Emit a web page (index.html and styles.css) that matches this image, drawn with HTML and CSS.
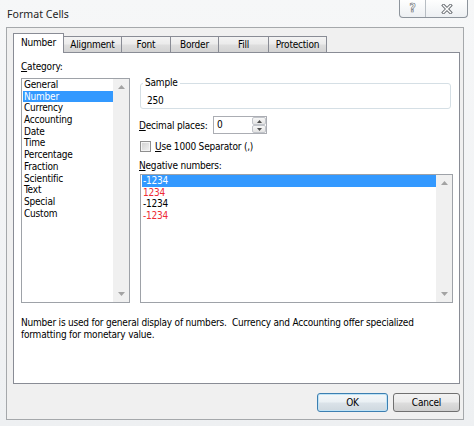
FILE: index.html
```html
<!DOCTYPE html>
<html>
<head>
<meta charset="utf-8">
<title>Format Cells</title>
<link rel="stylesheet" href="styles.css">
</head>
<body>
<div class="window">
  <div class="titlebar">
    <span class="title">Format Cells</span>
    <div class="caption">
      <div class="cbtn help"><span class="qmark">?</span></div>
      <div class="cbtn close">
        <svg width="12" height="10" viewBox="0 0 12 10"><path d="M2.5 1.5 L9.5 8.5 M9.5 1.5 L2.5 8.5" stroke="#6b6f74" stroke-width="3.2" fill="none" stroke-linecap="square"/><path d="M2.5 1.5 L9.5 8.5 M9.5 1.5 L2.5 8.5" stroke="#ffffff" stroke-width="1.4" fill="none" stroke-linecap="square"/></svg>
      </div>
    </div>
  </div>
  <div class="client">
    <div class="tabs">
      <div class="tab selected">Number</div>
      <div class="tab w58">Alignment</div>
      <div class="tab w49">Font</div>
      <div class="tab w48">Border</div>
      <div class="tab w50">Fill</div>
      <div class="tab w58">Protection</div>
    </div>
    <div class="panel">
      <div class="cols">
        <div class="leftcol">
          <div class="label"><u>C</u>ategory:</div>
          <div class="listbox catlist">
            <div class="items">
              <div class="item">General</div>
              <div class="item sel">Number</div>
              <div class="item">Currency</div>
              <div class="item">Accounting</div>
              <div class="item">Date</div>
              <div class="item">Time</div>
              <div class="item">Percentage</div>
              <div class="item">Fraction</div>
              <div class="item">Scientific</div>
              <div class="item">Text</div>
              <div class="item">Special</div>
              <div class="item">Custom</div>
            </div>
            <div class="scrollbar">
              <svg class="arr" width="7" height="4" viewBox="0 0 7 4"><polygon points="0,4 7,4 3.5,0" fill="#a3a3a3"/></svg>
              <svg class="arr" width="7" height="4" viewBox="0 0 7 4"><polygon points="0,0 7,0 3.5,4" fill="#a3a3a3"/></svg>
            </div>
          </div>
        </div>
        <div class="rightcol">
          <fieldset class="sample">
            <legend>Sample</legend>
            <div class="sampleval">250</div>
          </fieldset>
          <div class="decrow">
            <span class="declabel"><u>D</u>ecimal places:</span>
            <div class="spin">
              <span class="spinval">0</span>
              <div class="spinbtns">
                <div class="sb"><svg width="5" height="3" viewBox="0 0 5 3"><polygon points="0,3 5,3 2.5,0" fill="#4d4d4d"/></svg></div>
                <div class="sb"><svg width="5" height="3" viewBox="0 0 5 3"><polygon points="0,0 5,0 2.5,3" fill="#4d4d4d"/></svg></div>
              </div>
            </div>
          </div>
          <div class="chkrow">
            <span class="chk"></span>
            <span><u>U</u>se 1000 Separator (,)</span>
          </div>
          <div class="label neglabel"><u>N</u>egative numbers:</div>
          <div class="listbox neglist">
            <div class="items">
              <div class="item sel">-1234</div>
              <div class="item red">1234</div>
              <div class="item">-1234</div>
              <div class="item red">-1234</div>
            </div>
            <div class="scrollbar">
              <svg class="arr" width="7" height="4" viewBox="0 0 7 4"><polygon points="0,4 7,4 3.5,0" fill="#a3a3a3"/></svg>
              <svg class="arr" width="7" height="4" viewBox="0 0 7 4"><polygon points="0,0 7,0 3.5,4" fill="#a3a3a3"/></svg>
            </div>
          </div>
        </div>
      </div>
      <p class="desc">Number is used for general display of numbers.&nbsp; Currency and Accounting offer specialized formatting for monetary value.</p>
    </div>
    <div class="buttons">
      <div class="btn default">OK</div>
      <div class="btn cancel">Cancel</div>
    </div>
  </div>
</div>
</body>
</html>
```
FILE: styles.css
```css
html, body {
  margin: 0;
  padding: 0;
}
body {
  width: 474px;
  height: 426px;
  overflow: hidden;
  background: linear-gradient(180deg, #f6f7f8 0%, #eef0f2 100%);
  font-family: "DejaVu Sans Condensed", "DejaVu Sans", sans-serif;
  font-stretch: condensed;
  font-size: 10px;
  letter-spacing: -0.2px;
  color: #000;
}
.window {
  display: flex;
  flex-direction: column;
  height: 426px;
}
.titlebar {
  height: 27px;
  display: flex;
  justify-content: space-between;
  align-items: flex-start;
}
.title {
  margin: 6px 0 0 7px;
  font-family: "Noto Sans", sans-serif;
  font-stretch: normal;
  letter-spacing: 0;
  font-size: 10.6px;
  line-height: 16px;
  color: #1e1e1e;
}
.caption {
  display: flex;
  height: 17px;
  margin-right: 6px;
  border: 1px solid #8d949c;
  border-top: none;
  border-radius: 0 0 4px 4px;
  background: linear-gradient(180deg, rgba(255,255,255,0.9), rgba(236,239,242,0.9));
}
.cbtn {
  display: flex;
  align-items: center;
  justify-content: center;
}
.cbtn.help {
  width: 25px;
}
.cbtn.close {
  width: 41px;
  border-left: 1px solid #b7bdc3;
}
.qmark {
  font-family: "DejaVu Sans", sans-serif;
  font-size: 12px;
  font-weight: bold;
  line-height: 13px;
  color: #fff;
  -webkit-text-stroke: 0.6px #6b6f74;
}
.client {
  box-sizing: border-box;
  width: 458px;
  height: 393px;
  margin-left: 6px;
  border: 1px solid #a5a8ab;
  background: #f0f0f0;
  padding: 5px 3px 0 6px;
}
.tabs {
  display: flex;
  align-items: flex-end;
  height: 19px;
  position: relative;
  z-index: 1;
}
.tab {
  box-sizing: border-box;
  width: 51px;
  height: 16px;
  margin-right: -1px;
  border: 1px solid #898c95;
  border-bottom: none;
  background: linear-gradient(180deg, #f3f3f3 0%, #ebebeb 48%, #dedede 52%, #d3d3d3 100%);
  text-align: center;
  line-height: 15px;
  color: #000;
}
.tab.selected {
  width: 51px;
  height: 20px;
  margin-bottom: -1px;
  background: #fff;
  line-height: 17px;
  position: relative;
}
.tab.w58 { width: 59px; }
.tab.w49 { width: 50px; }
.tab.w48 { width: 49px; }
.tab.w50 { width: 51px; }
.panel {
  box-sizing: border-box;
  width: 447px;
  height: 332px;
  border: 1px solid #898c95;
  background: #fff;
  padding: 8px 6px 0 7px;
}
.cols {
  display: flex;
}
.leftcol {
  width: 109px;
}
.label {
  line-height: 12px;
  height: 12px;
}
.listbox {
  box-sizing: border-box;
  display: flex;
  border: 1px solid #9ea2a8;
  background: #fff;
}
.catlist {
  margin-top: 5px;
  width: 109px;
  height: 225px;
}
.items {
  flex: 1;
  padding: 0 0 0 1px;
}
.item {
  height: 11.7px;
  line-height: 11.7px;
  padding-left: 1px;
  white-space: nowrap;
}
.item.sel {
  background: #3399ff;
  color: #fff;
}
.item.red {
  color: #ee2b33;
}
.scrollbar {
  width: 16px;
  background: #f0f0f0;
  display: flex;
  flex-direction: column;
  justify-content: space-between;
  align-items: center;
  padding: 6px 0 6px;
  box-sizing: border-box;
}
.rightcol {
  margin-left: 9px;
  width: 314px;
}
.sample {
  margin: 16px 0 0 1px;
  width: 311px;
  box-sizing: border-box;
  height: 32px;
  border: 1px solid #d5dfe5;
  border-radius: 3px;
  padding: 0 0 1px 6px;
}
.sample legend {
  padding: 0 2px;
  margin-left: -4px;
  line-height: 12px;
}
.sampleval {
  margin-top: 6px;
  line-height: 12px;
}
.decrow {
  display: flex;
  align-items: center;
  height: 18px;
  margin-top: 7px;
}
.declabel {
  width: 74px;
}
.spin {
  box-sizing: border-box;
  width: 54px;
  height: 18px;
  border: 1px solid #abadb3;
  display: flex;
  justify-content: space-between;
  background: #fff;
}
.spinval {
  padding-left: 3px;
  line-height: 16px;
}
.spinbtns {
  width: 14px;
  display: flex;
  flex-direction: column;
}
.sb {
  flex: 1;
  box-sizing: border-box;
  border: 1px solid #c2c5ca;
  border-radius: 2px;
  background: linear-gradient(180deg, #f7f7f7, #e3e3e3);
  display: flex;
  align-items: center;
  justify-content: center;
}
.chkrow {
  display: flex;
  align-items: center;
  height: 12px;
  margin-top: 6px;
  margin-left: 1px;
  gap: 4px;
}
.chk {
  box-sizing: border-box;
  width: 11px;
  height: 11px;
  border: 1px solid #8f8f8f;
  background: linear-gradient(135deg, #cfcfcf, #f2f2f2);
  box-shadow: inset 0 0 0 1px #f4f4f4;
}
.neglabel {
  margin-top: 8px;
}
.neglist {
  margin: 2px 0 0 1px;
  width: 313px;
  height: 129px;
}
.desc {
  margin: 14px 0 0 0;
  line-height: 12px;
  width: 420px;
}
.buttons {
  display: flex;
  justify-content: flex-end;
  gap: 5px;
  margin-top: 9px;
}
.btn {
  box-sizing: border-box;
  height: 19px;
  border: 1px solid #707070;
  border-radius: 3px;
  background: linear-gradient(180deg, #f2f2f2 0%, #ebebeb 48%, #dddddd 52%, #cfcfcf 100%);
  text-align: center;
  line-height: 17px;
}
.btn.default {
  width: 71px;
  border-color: #3c7fb1;
  box-shadow: inset 0 0 0 1px #bfe3f6;
  background: linear-gradient(180deg, #f4f7f9 0%, #eaf0f4 48%, #dbe3e9 52%, #cfd8df 100%);
}
.btn.cancel {
  width: 67px;
}
```
